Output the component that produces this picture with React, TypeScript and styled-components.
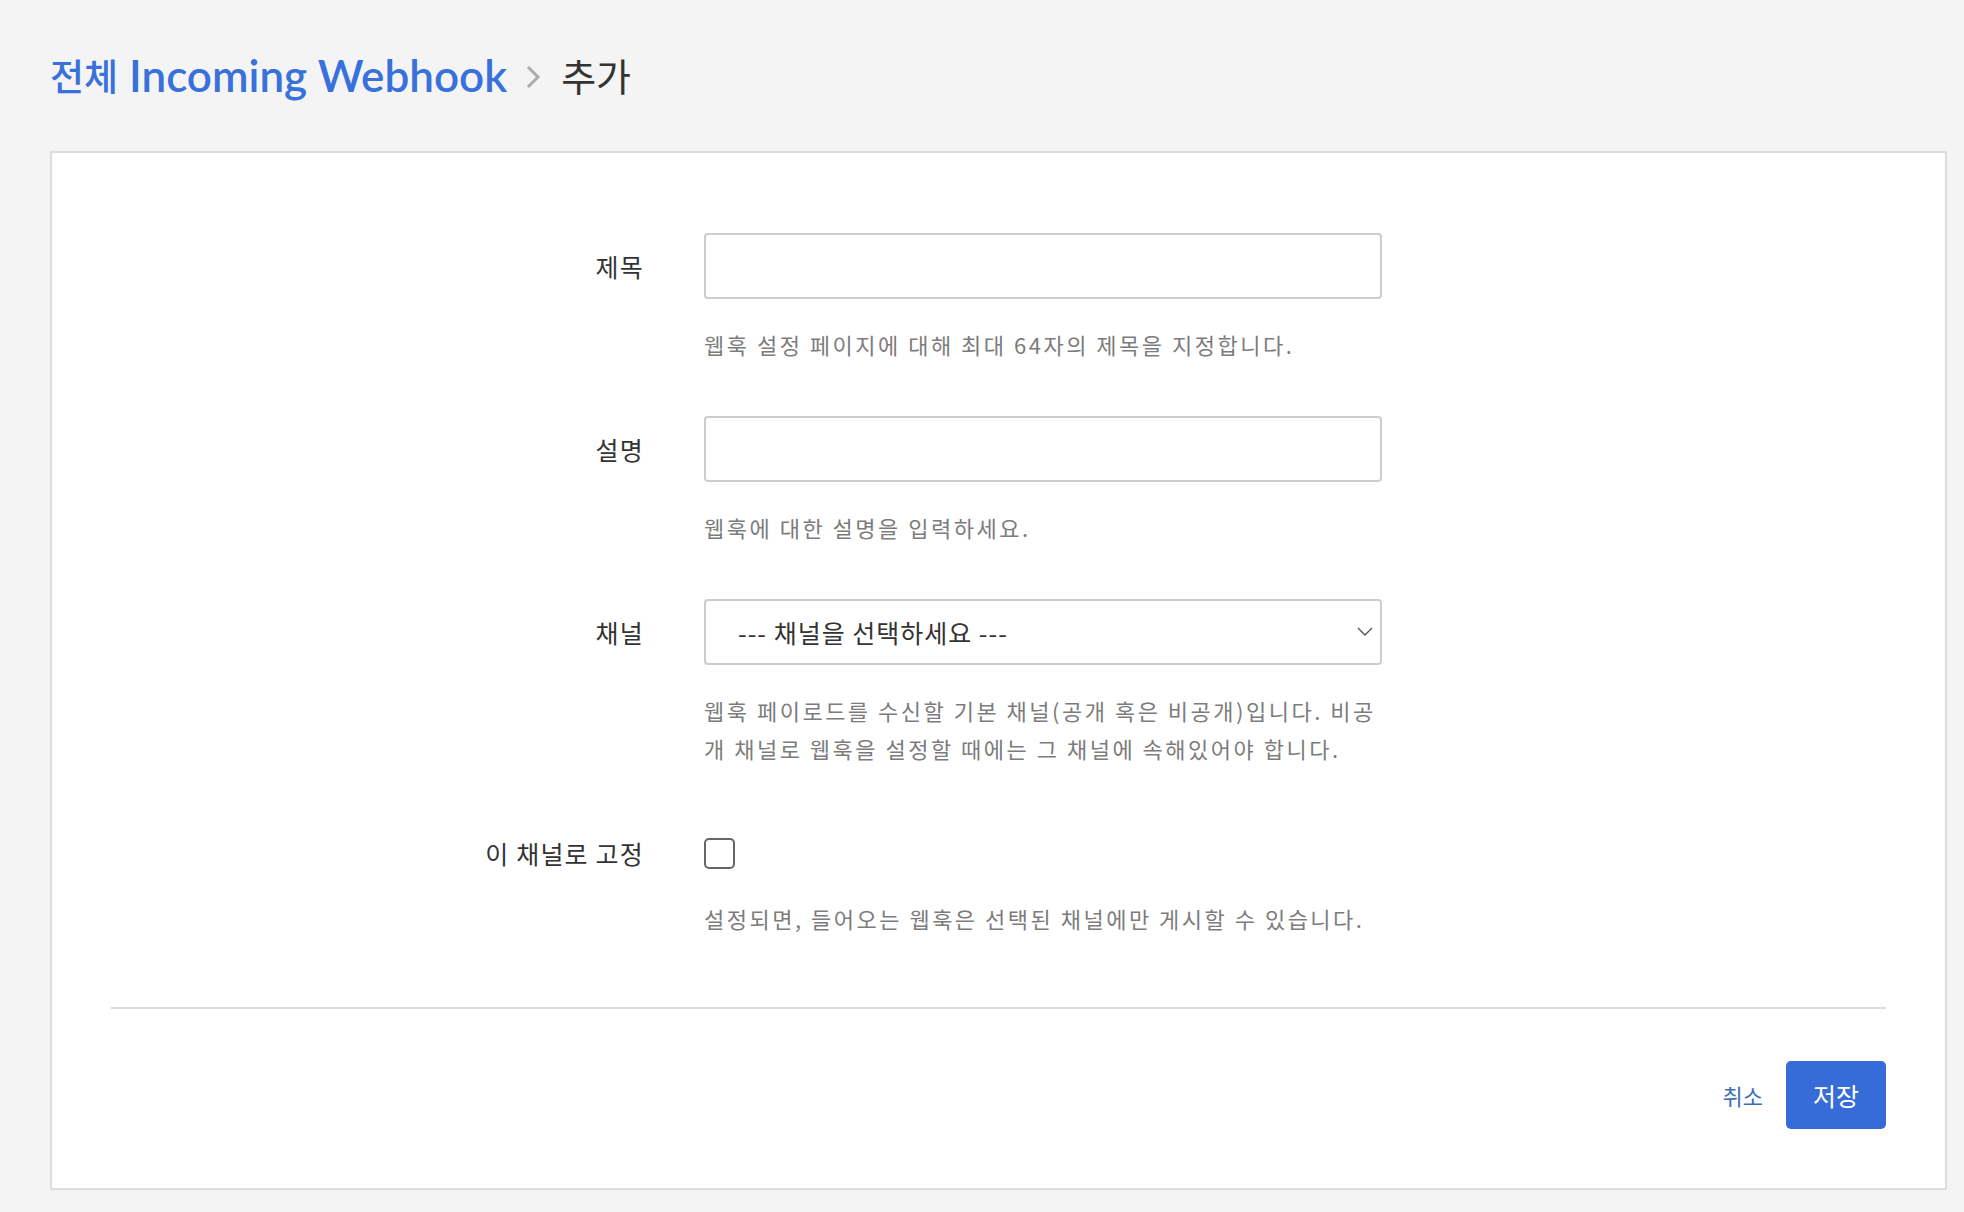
import React from 'react'
import styled, { createGlobalStyle } from 'styled-components'

const GlobalStyle = createGlobalStyle`
  html, body {
    margin: 0;
    padding: 0;
    background: #f4f4f4;
    font-family: 'Noto Sans CJK KR', 'Noto Sans', sans-serif;
  }
  * {
    box-sizing: border-box;
  }
`

const Page = styled('div')`
  min-height: 100vh;
  padding: 50px 17px 23px 50px;
`

const Breadcrumb = styled('nav')`
  display: flex;
  align-items: center;
  height: 50px;
  margin-bottom: 51px;
`

const CrumbLink = styled('a')`
  display: flex;
  align-items: center;
  color: #3870dc;
  font-family: Lato, 'Noto Sans CJK KR', sans-serif;
  font-size: 44px;
  font-weight: 600;
  text-decoration: none;
  white-space: nowrap;
  line-height: 50px;
`

const Hangul = styled('span')<{ $size: number }>`
  font-family: 'Noto Sans CJK KR', sans-serif;
  font-size: ${({ $size }) => $size}px;
  font-weight: 500;
  margin-right: 11px;
`

const Separator = styled('svg')`
  width: 15px;
  height: 24px;
  margin: 4px 20px 0 19px;
`

const Current = styled('span')`
  color: #333;
  font-size: 38px;
  line-height: 50px;
`

const Card = styled('section')`
  background: #fff;
  border: 2px solid #dcdcdc;
  padding: 80px 59px 59px;
`

const Form = styled('form')`
  display: flex;
  flex-direction: column;
`

const Field = styled('div')<{ $last?: boolean }>`
  display: grid;
  grid-template-columns: 532px auto;
  column-gap: 61px;
  margin-bottom: ${({ $last }) => ($last ? 0 : 53)}px;
`

const Label = styled('label')`
  grid-column: 1;
  text-align: right;
  align-self: center;
  margin-right: -1px;
  color: #333;
  font-size: 25px;
  letter-spacing: 1.2px;
  line-height: 66px;
`

const Control = styled('div')`
  grid-column: 2;
  position: relative;
  display: flex;
  align-items: center;
  height: 66px;
  width: 678px;
`

const TextInput = styled('input')`
  width: 678px;
  height: 66px;
  border: 2px solid #cdcdcd;
  border-radius: 4px;
  padding: 0 32px;
  font-family: inherit;
  font-size: 24px;
  color: #333;
  outline: none;
  background: #fff;
`

const Select = styled('select')`
  appearance: none;
  width: 678px;
  height: 66px;
  border: 2px solid #cdcdcd;
  border-radius: 4px;
  padding: 0 50px 0 32px;
  font-family: inherit;
  font-size: 25px;
  letter-spacing: 1px;
  color: #333;
  background: #fff;
  outline: none;
`

const SelectArrow = styled('svg')`
  position: absolute;
  right: 9px;
  top: 28px;
  width: 16px;
  height: 9px;
  pointer-events: none;
`

const Checkbox = styled('input')`
  appearance: none;
  margin: 0;
  width: 31px;
  height: 31px;
  border: 2px solid #666;
  border-radius: 5px;
  background: #fff;
`

const Help = styled('p')<{ $top?: number }>`
  grid-column: 2;
  margin: ${({ $top = 26 }) => $top}px 0 0;
  max-width: 684px;
  color: #7c7c7c;
  font-size: 22px;
  letter-spacing: 2.5px;
  line-height: 38px;
`

const Divider = styled('div')`
  height: 2px;
  background: #dcdcdc;
  margin-top: 70px;
`

const Actions = styled('div')`
  display: flex;
  justify-content: flex-end;
  align-items: center;
  gap: 23px;
  margin-top: 52px;
`

const CancelLink = styled('a')`
  color: #3b6fb6;
  font-size: 22px;
  text-decoration: none;
`

const SaveButton = styled('button')`
  width: 100px;
  height: 68px;
  border: none;
  border-radius: 5px;
  background: #376bd8;
  color: #fff;
  font-family: inherit;
  font-size: 25px;
`

export default function App() {
  return (
    <>
      <GlobalStyle />
      <Page>
        <Breadcrumb>
          <CrumbLink href="#">
            <Hangul $size={37}>전체</Hangul>
            Incoming Webhook
          </CrumbLink>
          <Separator viewBox="0 0 15 24">
            <path d="M2 2 L12 12 L2 22" fill="none" stroke="#acacac" strokeWidth="3" />
          </Separator>
          <Current>추가</Current>
        </Breadcrumb>
        <Card>
          <Form onSubmit={(e) => e.preventDefault()}>
            <Field>
              <Label>제목</Label>
              <Control>
                <TextInput type="text" />
              </Control>
              <Help>웹훅 설정 페이지에 대해 최대 64자의 제목을 지정합니다.</Help>
            </Field>
            <Field>
              <Label>설명</Label>
              <Control>
                <TextInput type="text" />
              </Control>
              <Help>웹훅에 대한 설명을 입력하세요.</Help>
            </Field>
            <Field>
              <Label>채널</Label>
              <Control>
                <Select defaultValue="">
                  <option value="">--- 채널을 선택하세요 ---</option>
                </Select>
                <SelectArrow viewBox="0 0 16 9">
                  <path d="M1 1 L8 8 L15 1" fill="none" stroke="#555" strokeWidth="1.4" />
                </SelectArrow>
              </Control>
              <Help>
                웹훅 페이로드를 수신할 기본 채널(공개 혹은 비공개)입니다. 비공개 채널로 웹훅을 설정할 때에는 그 채널에 속해있어야 합니다.
              </Help>
            </Field>
            <Field $last>
              <Label>이 채널로 고정</Label>
              <Control>
                <Checkbox type="checkbox" />
              </Control>
              <Help $top={13}>설정되면, 들어오는 웹훅은 선택된 채널에만 게시할 수 있습니다.</Help>
            </Field>
            <Divider />
            <Actions>
              <CancelLink href="#">취소</CancelLink>
              <SaveButton type="submit">저장</SaveButton>
            </Actions>
          </Form>
        </Card>
      </Page>
    </>
  )
}
